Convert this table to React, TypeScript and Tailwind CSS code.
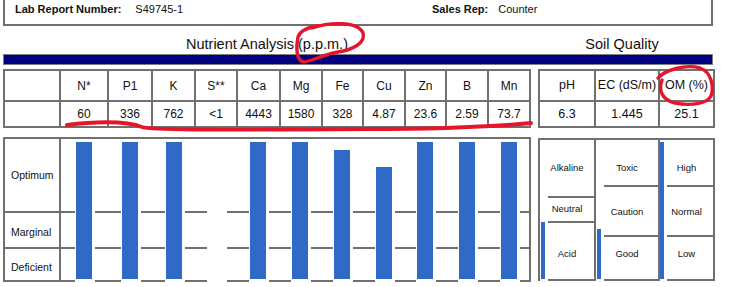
const LINE = "border-[#707070]";

const nutrients = [
  { name: "", value: "", w: "w-[56px]" },
  { name: "N*", value: "60", w: "w-[48px]" },
  { name: "P1", value: "336", w: "w-[44px]" },
  { name: "K", value: "762", w: "w-[43px]" },
  { name: "S**", value: "<1", w: "w-[42px]" },
  { name: "Ca", value: "4443", w: "w-[43px]" },
  { name: "Mg", value: "1580", w: "w-[42px]" },
  { name: "Fe", value: "328", w: "w-[41px]" },
  { name: "Cu", value: "4.87", w: "w-[42px]" },
  { name: "Zn", value: "23.6", w: "w-[41px]" },
  { name: "B", value: "2.59", w: "w-[42px]" },
  { name: "Mn", value: "73.7", w: "w-[42px]" },
];

const soil = [
  { name: "pH", value: "6.3", w: "w-[56px]" },
  { name: "EC (dS/m)", value: "1.445", w: "w-[64px]" },
  { name: "OM (%)", value: "25.1", w: "w-[55px]" },
];

// gap before each bar slot, then the bar (null = no bar drawn)
const chart = [
  { seg: "w-[14px]", bar: "h-[137px]" },
  { seg: "w-[26px]", bar: "h-[137px]" },
  { seg: "w-[24px]", bar: "h-[137px]" },
  { seg: "w-[22px]", bar: null },
  { seg: "w-[22px]", bar: "h-[137px]" },
  { seg: "w-[22px]", bar: "h-[137px]" },
  { seg: "w-[22px]", bar: "h-[129px]" },
  { seg: "w-[22px]", bar: "h-[112px]" },
  { seg: "w-[21px]", bar: "h-[137px]" },
  { seg: "w-[22px]", bar: "h-[137px]" },
  { seg: "w-[22px]", bar: "h-[137px]" },
];

const soilCols = [
  {
    w: "w-[56px] border-r-2",
    zone: "w-[8px] pl-[1px]",
    bar: "h-[57px]",
    pr: "pr-[8px]",
    rows: [
      { t: "Alkaline", h: "h-[58px]", pt: "pt-[22px]" },
      { t: "Neutral", h: "h-[25px]", pt: "pt-[5px]" },
      { t: "Acid", h: "h-[58px]", pt: "pt-[25px]" },
    ],
  },
  {
    w: "w-[64px] border-r-2",
    zone: "w-[8px] pl-[1px]",
    bar: "h-[50px]",
    pr: "pr-[8px]",
    rows: [
      { t: "Toxic", h: "h-[47px]", pt: "pt-[22px]" },
      { t: "Caution", h: "h-[50px]", pt: "pt-[19px]" },
      { t: "Good", h: "h-[44px]", pt: "pt-[11px]" },
    ],
  },
  {
    w: "w-[53px]",
    zone: "w-[7px]",
    bar: "h-[137px]",
    pr: "pr-[7px]",
    rows: [
      { t: "High", h: "h-[47px]", pt: "pt-[22px]" },
      { t: "Normal", h: "h-[50px]", pt: "pt-[19px]" },
      { t: "Low", h: "h-[44px]", pt: "pt-[11px]" },
    ],
  },
];

function Segment({ w }: { w: string }) {
  return (
    <div className={`${w} flex flex-col`}>
      <div className={`h-[74px] border-b-2 ${LINE}`} />
      <div className={`h-[36px] border-b-2 ${LINE}`} />
      <div className={`h-[33px] border-b-2 ${LINE}`} />
    </div>
  );
}

function Slot({ bar }: { bar: string | null }) {
  return (
    <div className="w-[20px] h-[143px] flex flex-col justify-end pb-[3px] pl-[1px] bg-white">
      {bar && <div className={`w-[16px] ${bar} bg-[#3169c6]`} />}
    </div>
  );
}

function Table({ cols, className }: { cols: { name: string; value: string; w: string }[]; className: string }) {
  return (
    <div className={`${className} flex border-l-2 border-t-2 ${LINE}`}>
      {cols.map((c, i) => (
        <div key={i} className={`${c.w} flex flex-col`}>
          <div className={`h-[31px] border-r-2 border-b-2 ${LINE} flex items-center justify-center whitespace-nowrap`}>{c.name}</div>
          <div className={`h-[26px] border-r-2 border-b-2 ${LINE} flex items-center justify-center`}>{c.value}</div>
        </div>
      ))}
    </div>
  );
}

export default function App() {
  return (
    <div className="relative w-[736px] h-[287px] overflow-hidden bg-white text-[#111] font-['Liberation_Sans',Arial,sans-serif]">
      {/* report header */}
      <div className={`ml-[3px] w-[710px] h-[26px] border-l-2 border-r-2 border-b-2 ${LINE} flex text-[11px] leading-[13px] pt-[3px]`}>
        <div className="w-[427px] pl-[10px] flex">
          <span className="font-bold">Lab Report Number:</span>
          <span className="ml-[14px]">S49745-1</span>
        </div>
        <div className="flex">
          <span className="font-bold">Sales Rep:</span>
          <span className="ml-[10px]">Counter</span>
        </div>
      </div>

      {/* section titles */}
      <div className="flex mt-[10px] h-[17px] text-[14.5px] leading-[17px]">
        <div className="ml-[3px] w-[528px] text-center">Nutrient Analysis (p.p.m.)</div>
        <div className="ml-[7px] w-[177px] pr-[9px] text-center">Soil Quality</div>
      </div>
      <div className="mt-[1px] ml-[3px] w-[710px] h-[11px] border border-[#808080] bg-[#000080]" />

      {/* value tables */}
      <div className="flex items-start mt-[4px]">
        <Table cols={nutrients} className="ml-[3px] text-[12px]" />
        <Table cols={soil} className="ml-[7px] text-[12.5px]" />
      </div>

      {/* level charts */}
      <div className="flex items-start mt-[9px]">
        <div className={`ml-[3px] flex border-l-2 border-t-2 border-r-2 ${LINE}`}>
          <div className={`w-[56px] border-r-2 ${LINE} flex flex-col text-[10.5px] leading-[12px]`}>
            <div className={`h-[74px] border-b-2 ${LINE} flex items-center pl-[6px]`}>Optimum</div>
            <div className={`h-[36px] border-b-2 ${LINE} flex items-center pl-[6px] pt-[3px]`}>Marginal</div>
            <div className={`h-[33px] border-b-2 ${LINE} flex items-center pl-[6px] pt-[5px]`}>Deficient</div>
          </div>
          <div className="flex">
            {chart.map((c, i) => (
              <div key={i} className="flex">
                <Segment w={c.seg} />
                <Slot bar={c.bar} />
              </div>
            ))}
            <Segment w="w-[9px]" />
          </div>
        </div>

        <div className={`ml-[7px] mt-[1px] flex border-l-2 border-t-2 border-r-2 ${LINE} text-[9.5px] leading-[12px]`}>
          {soilCols.map((c, i) => (
            <div key={i} className={`${c.w} ${LINE} h-[141px] flex`}>
              <div className={`${c.zone} h-full flex flex-col justify-end pb-[2px]`}>
                <div className={`w-[4px] ${c.bar} bg-[#3169c6]`} />
              </div>
              <div className="flex-1 flex flex-col">
                {c.rows.map((r) => (
                  <div key={r.t} className={`${r.h} ${r.pt} ${c.pr} border-b-2 ${LINE} text-center`}>
                    {r.t}
                  </div>
                ))}
              </div>
            </div>
          ))}
        </div>
      </div>

      {/* red pen annotations */}
      <svg className="absolute left-0 top-0 pointer-events-none" width="736" height="287" viewBox="0 0 736 287" fill="none">
        <g stroke="#e3162c" strokeWidth="3.4" strokeLinecap="round" strokeLinejoin="round">
          <path d="M312 28 C330 22 358 21 363 33 C366 43 352 50 338 52 C322 55 312 61 304 62 C296 61 296 47 298 37 C300 31 306 28 316 26" />
          <path d="M658 78 C665 70 685 64 700 68 C712 72 714 88 711 96 C707 104 690 106 675 103 C662 100 658 90 662 80" />
          <path d="M67 125 C90 122 125 120 142 127 C150 130 200 130 368 129 C440 129 500 126 531 123" strokeWidth="3.8" />
        </g>
      </svg>
    </div>
  );
}
